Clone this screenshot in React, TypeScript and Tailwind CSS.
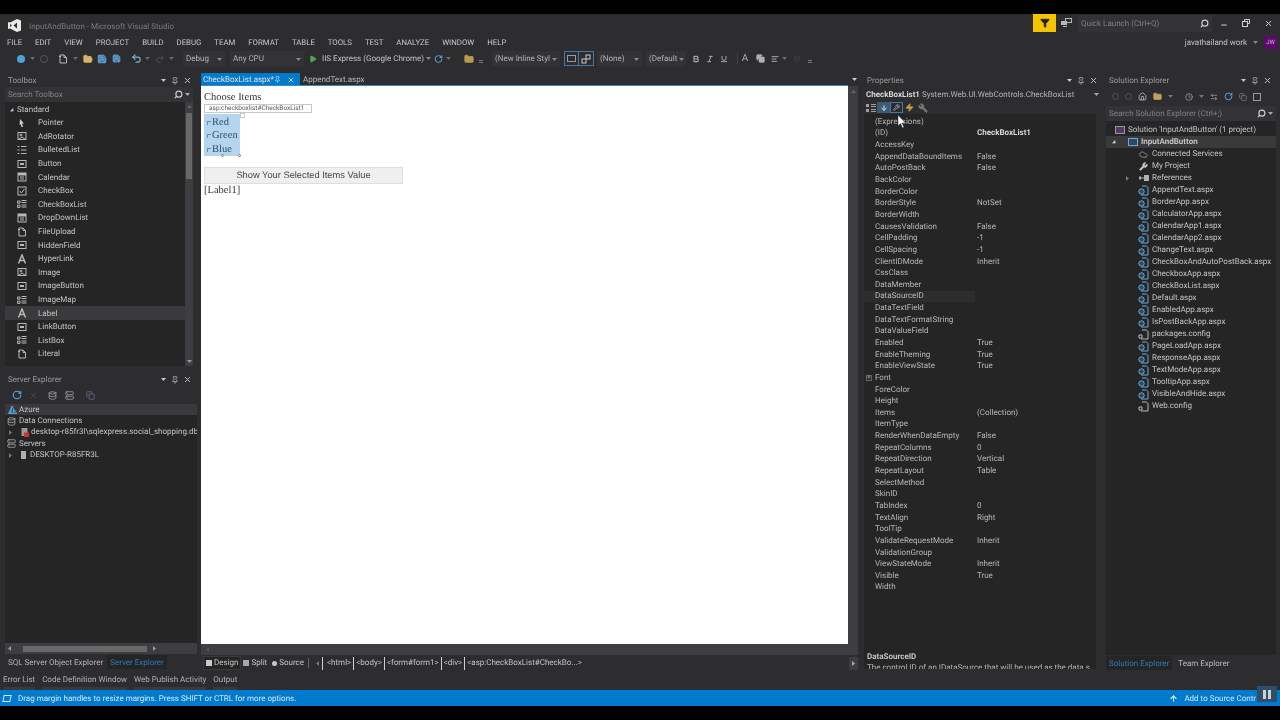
import React from "react";
import { Pin, X, Search, RotateCw, Undo2, Redo2, Play, Save, Minus, Bold, Italic, Underline, AlignLeft, Wrench, Home, ArrowUp, Filter, Cloud, Zap, Clock, ArrowLeftRight, Copy, Folder, FolderOpen, Server, Database, Trash2 } from "lucide-react";

const Caret = ({ c = "" }: { c?: string }) => (
  <svg width="5" height="3" viewBox="0 0 5 3" className={`shrink-0 ${c}`}><path d="M0 0h5L2.5 3z" fill="currentColor" /></svg>
);

const Grip = () => (
  <div className="flex items-center text-[#c8c8c8]">
    <Caret c="mr-[5px]" />
    <Pin size={8} strokeWidth={2} className="mr-[3.500px]" />
    <X size={9} strokeWidth={2.5} />
  </div>
);

const PanelTitle = ({ title, w }: { title: string; w?: string }) => (
  <div className={`flex h-[14px] shrink-0 items-center justify-between pl-[3px] pt-[1px] ${w ?? ""}`}>
    <span className="text-[#9a9a9a]">{title}</span>
    <Grip />
  </div>
);

const TB = ({ w, children, c = "" }: { w: number; children?: React.ReactNode; c?: string }) => (
  <div style={{ width: w }} className={`flex h-full shrink-0 items-center justify-center ${c}`}>{children}</div>
);

const Combo = ({ w, label, c = "" }: { w: number; label: string; c?: string }) => (
  <div style={{ width: w }} className={`flex h-[15px] shrink-0 items-center justify-between bg-[#333337] px-[3px] text-[#b4b4b4] ${c}`}>
    <span className="whitespace-nowrap">{label}</span>
    <Caret c="ml-[2px] text-[#8a8a8a]" />
  </div>
);

const Drop = () => <TB w={11}><Caret c="text-[#6a6a6a]" /></TB>;

type Kind = "arrow" | "box" | "list" | "check" | "cal" | "a" | "img" | "doc" | "lines";
const ToolIcon = ({ k }: { k: Kind }) => {
  const s = "#b8b8b8";
  return (
    <svg width="10" height="10" viewBox="0 0 10 10" fill="none" stroke={s} strokeWidth="1">
      {k === "arrow" && <path d="M3 1l4 4.5H5L6 9H4.500L3.500 6 2.500 7z" fill="#d0d0d0" stroke="none" />}
      {k === "box" && <><rect x="1" y="1.500" width="8" height="7" /><rect x="3" y="4" width="4" height="2" fill={s} stroke="none" /></>}
      {k === "list" && <path d="M0.500 1.500h2M0.500 5h2M0.500 8.500h2M4 1.500h5.500M4 5h5.500M4 8.500h5.500" />}
      {k === "check" && <><rect x="1" y="1" width="8" height="8" /><path d="M2.800 5l1.600 2 3-4" /></>}
      {k === "cal" && <><rect x="1" y="1" width="8" height="8" /><rect x="1" y="1" width="8" height="2.500" fill={s} stroke="none" /><path d="M3 5h4M3 7h4" /></>}
      {k === "a" && <path d="M1.500 9.500L5 1l3.500 8.500M3 6.500h4" strokeWidth="1.500" />}
      {k === "img" && <><rect x="1" y="1.500" width="8" height="7" /><circle cx="4" cy="4" r="1" /><path d="M2 8l3-2 3 2" /></>}
      {k === "doc" && <path d="M2 1h4l2.500 2.500V9H2zM6 1v2.500h2.500M1 2.500h2" />}
      {k === "lines" && <><path d="M0.500 2h2.500v2.200H.5zM.5 6.200h2.500v2.200H.5z" /><path d="M4.500 1.500h5M4.500 3.500h5M4.500 6h5M4.500 8h5" /></>}
    </svg>
  );
};

const toolbox: [string, Kind][] = [
  ["Pointer", "arrow"], ["AdRotator", "img"], ["BulletedList", "list"], ["Button", "box"], ["Calendar", "cal"],
  ["CheckBox", "check"], ["CheckBoxList", "lines"], ["DropDownList", "cal"], ["FileUpload", "doc"], ["HiddenField", "box"],
  ["HyperLink", "a"], ["Image", "img"], ["ImageButton", "box"], ["ImageMap", "lines"], ["Label", "a"],
  ["LinkButton", "box"], ["ListBox", "lines"], ["Literal", "doc"],
];

const props: [string, string?][] = [
  ["(Expressions)"], ["(ID)", "CheckBoxList1"], ["AccessKey"], ["AppendDataBoundItems", "False"], ["AutoPostBack", "False"],
  ["BackColor"], ["BorderColor"], ["BorderStyle", "NotSet"], ["BorderWidth"], ["CausesValidation", "False"],
  ["CellPadding", "-1"], ["CellSpacing", "-1"], ["ClientIDMode", "Inherit"], ["CssClass"], ["DataMember"],
  ["DataSourceID"], ["DataTextField"], ["DataTextFormatString"], ["DataValueField"], ["Enabled", "True"],
  ["EnableTheming", "True"], ["EnableViewState", "True"], ["Font"], ["ForeColor"], ["Height"],
  ["Items", "(Collection)"], ["ItemType"], ["RenderWhenDataEmpty", "False"], ["RepeatColumns", "0"], ["RepeatDirection", "Vertical"],
  ["RepeatLayout", "Table"], ["SelectMethod"], ["SkinID"], ["TabIndex", "0"], ["TextAlign", "Right"],
  ["ToolTip"], ["ValidateRequestMode", "Inherit"], ["ValidationGroup"], ["ViewStateMode", "Inherit"], ["Visible", "True"], ["Width"],
];

const files = [
  "AppendText.aspx", "BorderApp.aspx", "CalculatorApp.aspx", "CalendarApp1.aspx", "CalendarApp2.aspx", "ChangeText.aspx",
  "CheckBoxAndAutoPostBack.aspx", "CheckboxApp.aspx", "CheckBoxList.aspx", "Default.aspx", "EnabledApp.aspx", "IsPostBackApp.aspx",
  "packages.config", "PageLoadApp.aspx", "ResponseApp.aspx", "TextModeApp.aspx", "TooltipApp.aspx", "VisibleAndHide.aspx", "Web.config",
];

const FileIcon = ({ cfg }: { cfg: boolean }) => (
  <svg width="11" height="11" viewBox="0 0 11 11" fill="none" stroke={cfg ? "#b8b8b8" : "#6fa8cf"} strokeWidth="1">
    <path d="M4 1h4.500l1.500 1.500V10H3" />
    {cfg ? <path d="M1 6h3v3H1z" /> : <circle cx="3.500" cy="6.500" r="2.700" fill="#2a4a63" />}
  </svg>
);

const SolRow = ({ indent, icon, label, bold, bg, arrow }: { indent: number; icon: React.ReactNode; label: string; bold?: boolean; bg?: boolean; arrow?: React.ReactNode }) => (
  <div className={`relative flex h-[12px] shrink-0 items-center text-[#c4c4c4] ${bold ? "font-bold" : ""} ${bg ? "bg-[#3a3a3d]" : ""}`} style={{ paddingLeft: indent }}>
    {arrow}
    <span className="mr-[3px] flex w-[11px] shrink-0 justify-center">{icon}</span>
    <span className="whitespace-nowrap">{label}</span>
  </div>
);

const Chk = ({ label }: { label: string }) => (
  <div className="flex h-[13.500px] items-center">
    <span className="mr-[1px] ml-[3px] h-[4px] w-[4px] border-l border-t border-[#6b8aa3]" />
    <span>{label}</span>
  </div>
);

const Crumb = ({ t }: { t: string }) => (
  <span className="flex h-[13px] items-center whitespace-nowrap border-r border-[#d0d0d0] px-[2px]">{t}</span>
);

const menu = ["FILE", "EDIT", "VIEW", "PROJECT", "BUILD", "DEBUG", "TEAM", "FORMAT", "TABLE", "TOOLS", "TEST", "ANALYZE", "WINDOW", "HELP"];

export default function App() {
  return (
    <div className="flex h-[720px] w-[1280px] flex-col overflow-hidden bg-black py-[14px] text-[8px] text-[#c4c4c4] blur-[0.3px] [text-rendering:geometricPrecision]" style={{ fontFamily: 'Roboto, "Noto Sans", sans-serif' }}>
      <div className="flex h-[692px] flex-col bg-[#2d2d30]">
        {/* title bar */}
        <div className="flex h-[20px] shrink-0 items-start">
          <div className="ml-[7px] mt-[4px] w-[22px]">
            <svg width="15" height="15" viewBox="0 0 15 15"><path d="M10 1l4 1.500v10L10 14 3 10.500 1 11V4l2 .500zM10 4.500L6.500 7.500 10 10.500z" fill="#e8e8e8" /><path d="M3 6l2 1.500L3 9z" fill="#2d2d30" /></svg>
          </div>
          <span className="mt-[7px] text-[#7a7a7a]">InputAndButton - Microsoft Visual Studio</span>
          <div className="ml-auto flex h-[18px] items-center">
            <div className="flex h-[18px] w-[23px] items-center justify-center bg-[#f5c400]"><Filter size={10} fill="#222" stroke="#222" /></div>
            <div className="flex w-[20px] justify-center"><svg width="11" height="10" viewBox="0 0 11 10" fill="none" stroke="#b8b8b8"><rect x="4.500" y="0.500" width="6" height="4" /><rect x="0.500" y="3.500" width="5" height="3" fill="#b8b8b8" /><path d="M2 8.500h4" /></svg></div>
            <div className="ml-[2px] flex h-[17px] w-[134px] items-center justify-between bg-[#333337] px-[3px]">
              <span className="pt-[1px] text-[#808080]">Quick Launch (Ctrl+Q)</span>
              <Search size={9} strokeWidth={3} className="-scale-x-100 text-[#d0d0d0]" />
            </div>
            <div className="flex w-[23px] justify-center"><Minus size={8} strokeWidth={3} className="mt-[4px] text-[#d0d0d0]" /></div>
            <div className="flex w-[22px] justify-center"><svg width="8" height="8" viewBox="0 0 8 8" fill="none" stroke="#d0d0d0"><path d="M2.500 2V.5h5v4H6" /><rect x=".5" y="2.500" width="5" height="5" /></svg></div>
            <div className="flex w-[23px] justify-center"><X size={9} strokeWidth={2.500} className="text-[#d0d0d0]" /></div>
          </div>
        </div>
        {/* menu */}
        <div className="flex h-[16px] shrink-0 items-center">
          <div className="ml-[7px] flex gap-[13px] pt-[1px] text-[7.800px] text-[#c8c8c8]">
            {menu.map((m) => <span key={m}>{m}</span>)}
          </div>
          <div className="ml-auto flex items-center">
            <span className="pt-[1px] text-[#c4c4c4]">javathailand work</span>
            <Caret c="mx-[6px] text-[#8a8a8a]" />
            <div className="mr-[3px] flex h-[13px] w-[13px] items-center justify-center bg-[#5c0a6b] text-[6px] text-[#d8b0e0]">JW</div>
          </div>
        </div>
        {/* toolbar */}
        <div className="flex h-[17px] shrink-0 items-center pl-[15px]">
          <TB w={12}><span className="h-[8px] w-[8px] rounded-full bg-[#4f9fd8]" /></TB>
          <Drop />
          <TB w={12}><span className="h-[8px] w-[8px] rounded-full border border-[#555]" /></TB>
          <TB w={6} />
          <TB w={13}><ToolIcon k="doc" /></TB>
          <TB w={12}><Caret c="text-[#6a6a6a]" /></TB>
          <TB w={13}><FolderOpen size={10} fill="#d8b56a" className="text-[#d8b56a]" /></TB>
          <TB w={15}><Save size={10} className="text-[#7ab0dc]" fill="#3f7cb0" /></TB>
          <TB w={15}><Save size={9} className="text-[#7ab0dc]" fill="#3f7cb0" /></TB>
          <TB w={7} />
          <TB w={11}><Undo2 size={11} strokeWidth={2.500} className="text-[#7ab0dc]" /></TB>
          <Drop />
          <TB w={13}><Redo2 size={10} className="text-[#555]" /></TB>
          <Drop />
          <TB w={6} />
          <Combo w={42} label="Debug" c="pt-[1px]" />
          <TB w={5} />
          <Combo w={74} label="Any CPU" c="pt-[1px]" />
          <TB w={5} />
          <TB w={8}><Play size={8} fill="#4fa94f" stroke="#4fa94f" /></TB>
          <span className="ml-[5px] w-[100px] shrink-0 whitespace-nowrap pt-[1px] text-[#c4c4c4]">IIS Express (Google Chrome)</span>
          <TB w={12}><Caret c="text-[#8a8a8a]" /></TB>
          <TB w={9}><RotateCw size={10} strokeWidth={2.500} className="text-[#5fa8e0]" /></TB>
          <Drop />
          <TB w={9} />
          <TB w={11}><Folder size={10} fill="#b89a50" className="text-[#b89a50]" /></TB>
          <TB w={13}><span className="mt-[5px] h-[3px] w-[4px] border-y border-[#777]" /></TB>
          <TB w={5} />
          <Combo w={68} label="(New Inline Styl" c="pt-[1px]" />
          <TB w={4} />
          <div className="flex h-[15px] w-[30px] shrink-0 border border-[#3f78ac]">
            <TB w={14} c="border-r border-[#3f78ac]"><span className="h-[7px] w-[9px] border border-[#999]" /></TB>
            <TB w={14}><svg width="10" height="10" viewBox="0 0 10 10" fill="none" stroke="#c8c8c8"><rect x="1" y="5" width="4" height="4" /><rect x="5" y="1" width="4" height="4" /></svg></TB>
          </div>
          <TB w={3} />
          <Combo w={45} label="(None)" c="pt-[1px]" />
          <TB w={4} />
          <Combo w={40} label="(Default" c="pt-[1px]" />
          <TB w={20}><Bold size={8} strokeWidth={3.500} className="text-[#a8a8a8]" /></TB>
          <TB w={8}><Italic size={8} strokeWidth={3} className="text-[#a8a8a8]" /></TB>
          <TB w={20}><Underline size={8} strokeWidth={3} className="text-[#a8a8a8]" /></TB>
          <TB w={7}><span className="h-[11px] w-px bg-[#444]" /></TB>
          <TB w={8}><span className="text-[10px] leading-none text-[#b0b0b0]">A</span></TB>
          <TB w={22}><Copy size={9} fill="#b0b0b0" className="text-[#b0b0b0]" /></TB>
          <TB w={8}><AlignLeft size={10} strokeWidth={2.500} className="text-[#c0c0c0]" /></TB>
          <Drop />
          <TB w={14}><Trash2 size={8} className="text-[#444]" /></TB>
          <TB w={12}><span className="mt-[5px] h-[3px] w-[4px] border-y border-[#777]" /></TB>
        </div>
        {/* panels */}
        <div className="mt-[6px] flex h-[597px] shrink-0">
          {/* left */}
          <div className="flex w-[197px] shrink-0 flex-col pl-[5px]">
            <PanelTitle title="Toolbox" w="w-[188px] pr-[1.500px]" />
            <div className="flex h-[15px] w-[188px] shrink-0 items-center justify-between bg-[#333337] px-[3px]">
              <span className="pt-[1px] text-[#808080]">Search Toolbox</span>
              <div className="flex items-center gap-[2px]"><Search size={9} strokeWidth={3} className="-scale-x-100 text-[#d0d0d0]" /><Caret c="text-[#aaa]" /></div>
            </div>
            <div className="flex h-[264px] w-[188px] shrink-0 overflow-hidden">
              <div className="w-[180px] bg-[#252526] pt-[1px]">
                <div className="flex h-[13px] items-center pl-[5px] pt-[1px] text-[#c4c4c4]"><Caret c="mr-[2px] rotate-[-45deg]" />Standard</div>
                {toolbox.map(([n, k]) => (
                  <div key={n} className={`flex h-[13.600px] items-center pl-[12px] ${n === "Label" ? "bg-[#3a3a3d]" : ""}`}>
                    <span className="flex w-[21px] shrink-0"><ToolIcon k={k} /></span>
                    <span className="pt-[1px] text-[#c4c4c4]">{n}</span>
                  </div>
                ))}
              </div>
              <div className="flex w-[8px] flex-col items-center bg-[#3e3e42]">
                <Caret c="mt-[3px] rotate-180 text-[#666]" />
                <div className="mt-[5px] h-[66px] w-[6px] bg-[#686868]" />
                <div className="flex-1" />
                <Caret c="mb-[3px] text-[#999]" />
              </div>
            </div>
            <div className="h-[6px] shrink-0" />
            <PanelTitle title="Server Explorer" w="w-[188px] pr-[1.500px]" />
            <div className="flex h-[18px] shrink-0 items-center gap-[7px] pl-[7px]">
              <RotateCw size={10} strokeWidth={2.500} className="text-[#5fa8e0]" />
              <X size={9} className="text-[#555]" />
              <Database size={9} className="ml-[3px] text-[#a8a8a8]" />
              <Server size={9} className="ml-[1px] text-[#a8a8a8]" />
              <Copy size={9} className="ml-[5px] text-[#7a6a98]" />
            </div>
            <div className="flex h-[239px] w-[192px] shrink-0 flex-col overflow-hidden bg-[#252526] text-[#c4c4c4]">
              <div className="flex h-[11px] shrink-0 items-center bg-[#3a3a3d] pl-[3px] pt-[1px]">
                <svg width="9" height="8" viewBox="0 0 9 8" className="mr-[2px] shrink-0"><path d="M3.500 0h2L3 6.500h6L9 8H0zM5.500 2L8 6H4.500z" fill="#4fa3e0" /></svg>Azure
                <span className="hidden" />
              </div>
              <div className="flex h-[11.300px] shrink-0 items-center pl-[2px] pt-[1px]"><Database size={9} className="mr-[3px] shrink-0 text-[#b0b0b0]" />Data Connections</div>
              <div className="flex h-[11.300px] shrink-0 items-center pl-[3px] pt-[1px]">
                <Caret c="mr-[8px] -rotate-90 text-[#777]" />
                <svg width="8" height="9" viewBox="0 0 8 9" className="mr-[2px] shrink-0"><rect x="0.500" y="0" width="6" height="8" fill="#9a9a9a" /><rect x="3" y="4.500" width="5" height="4.500" fill="#d03030" /></svg>
                <span className="whitespace-nowrap">desktop-r85fr3l\sqlexpress.social_shopping.dbo</span>
              </div>
              <div className="flex h-[11.300px] shrink-0 items-center pl-[2px] pt-[1px]"><Server size={9} className="mr-[3px] shrink-0 text-[#b0b0b0]" />Servers</div>
              <div className="flex h-[11.300px] shrink-0 items-center pl-[3px] pt-[1px]">
                <Caret c="mr-[8px] -rotate-90 text-[#777]" />
                <span className="mr-[4px] h-[8px] w-[5px] shrink-0 bg-[#b0b0b0]" />DESKTOP-R85FR3L
              </div>
            </div>
            <div className="flex h-[11px] w-[192px] shrink-0 items-center bg-[#3e3e42] px-[2px]">
              <Caret c="rotate-90 text-[#999]" />
              <div className="ml-[11px] h-[6px] w-[124px] bg-[#686868]" />
              <Caret c="ml-[5px] -rotate-90 text-[#999]" />
            </div>
            <div className="flex h-[15px] shrink-0 items-center pt-[1px]">
              <span className="px-[3px] pt-[1px] text-[#b4b4b4]">SQL Server Object Explorer</span>
              <span className="ml-[1px] flex h-[14px] items-center bg-[#252526] px-[3px] pt-[1px] text-[#2f79b5]">Server Explorer</span>
            </div>
          </div>
          {/* centre */}
          <div className="ml-[4px] flex w-[657px] shrink-0 flex-col">
            <div className="flex h-[12px] shrink-0 items-center">
              <div className="flex h-[13px] w-[99px] items-center justify-between bg-[#007acc] px-[2px] pt-[1px] text-[#e4e4e4]">
                <span>CheckBoxList.aspx*</span>
                <div className="flex items-center gap-[6px] pr-[3px]"><Pin size={7} /><X size={8} strokeWidth={2.500} /></div>
              </div>
              <span className="ml-[3px] pt-[1px] text-[#b8b8b8]">AppendText.aspx</span>
              <Caret c="ml-auto mr-[1px] text-[#ccc]" />
            </div>
            <div className="h-[1px] w-[647px] shrink-0 bg-[#3f86c0]" />
            <div className="flex h-[558px] shrink-0">
              <div className="w-[647px] bg-white pl-[3px] pt-[6px] text-[#222]" style={{ fontFamily: '"Liberation Serif", serif' }}>
                <div className="text-[10.500px] leading-[12px] text-[#333]">Choose Items</div>
                <div className="flex h-[9px] w-[108px] items-center border border-[#c8c8c8] pl-[4px] text-[6.500px] leading-none text-[#555]" style={{ fontFamily: 'Roboto, sans-serif' }}>asp:checkboxlist#CheckBoxList1</div>
                <div className="relative mt-[1px] h-[42px] w-[36px] bg-[#b5d5ee] pt-[2px] text-[10.500px] text-[#27506f]">
                  <Chk label="Red" /><Chk label="Green" /><Chk label="Blue" />
                  <span className="absolute -right-[5px] -top-[1px] h-[5px] w-[5px] border border-[#ccc] bg-white" />
                  <span className="absolute -bottom-[1px] -right-[1px] h-[3px] w-[3px] rounded-full border border-[#777] bg-white" />
                  <span className="absolute -bottom-[1px] left-[17px] h-[3px] w-[3px] rounded-full border border-[#777] bg-white" />
                </div>
                <div className="mt-[11px] flex h-[17px] w-[199px] items-center justify-center border border-[#dedede] bg-[#efefef] pt-[1px] text-[#444]" style={{ fontFamily: '"Liberation Sans", sans-serif', fontSize: "9.300px" }}>Show Your Selected Items Value</div>
                <div className="mt-[1px] text-[10.500px] leading-[12px] text-[#333]">[Label1]</div>
              </div>
              <div className="flex w-[10px] flex-col items-center bg-[#3e3e42]"><Caret c="mt-[4px] rotate-180 text-[#666]" /></div>
            </div>
            <div className="flex h-[11px] shrink-0 items-center bg-[#3e3e42] pl-[4px]"><Caret c="rotate-90 text-[#555]" /></div>
            <div className="flex h-[15px] shrink-0 items-center pt-[1px] text-[#c4c4c4]">
              <div className="ml-[2px] flex h-[14px] items-center border border-[#3a3a3d] bg-[#252526] px-[2px]"><span className="mr-[2px] h-[6px] w-[6px] bg-[#c8c8c8]" />Design</div>
              <div className="ml-[2px] flex items-center"><span className="mr-[2px] h-[6px] w-[6px] bg-[#a8a8a8]" />Split</div>
              <div className="ml-[5px] flex items-center"><span className="mr-[2px] h-[5px] w-[5px] rounded-full bg-[#c8c8c8]" />Source</div>
              <div className="ml-[4px] mr-[6px] h-[10px] w-px bg-[#666]" />
              <Caret c="mr-[2px] rotate-90 text-[#777]" />
              <span className="mr-[2px] h-[13px] w-px bg-[#d0d0d0]" />
              <Crumb t="<html>" /><Crumb t="<body>" /><Crumb t="<form#form1>" /><Crumb t="<div>" />
              <span className="whitespace-nowrap pl-[2px]">{"<asp:CheckBoxList#CheckBo...>"}</span>
              <div className="ml-auto flex h-[13px] w-[9px] items-center justify-center bg-[#3e3e42]"><Caret c="-rotate-90 text-[#aaa]" /></div>
            </div>
          </div>
          {/* properties */}
          <div className="relative ml-[6px] flex w-[236px] shrink-0 flex-col">
            <PanelTitle title="Properties" w="w-[236px] pr-[2.500px]" />
            <div className="flex h-[14px] shrink-0 items-center justify-between pl-[2px] pr-[1px] pt-[1px]">
              <span className="whitespace-nowrap text-[#b4b4b4]"><b className="text-[#d8d8d8]">CheckBoxList1</b> System.Web.UI.WebControls.CheckBoxList</span>
              <Caret c="text-[#aaa]" />
            </div>
            <div className="flex h-[13px] shrink-0 items-center pl-[2px]">
              <svg width="10" height="10" viewBox="0 0 10 10" className="mr-[1px] shrink-0"><path d="M0 1h3v3H0zM0 6h3v3H0zM5 1h5v1H5zM5 3h5v1H5zM5 6h5v1H5zM5 8h5v1H5z" fill="#a0a0a0" /></svg>
              <span className="flex h-[11px] w-[13px] items-center justify-center bg-[#3d5a73]"><ArrowUp size={8} strokeWidth={3} className="rotate-180 text-[#cfe2f0]" /></span>
              <span className="flex h-[11px] w-[13px] items-center justify-center border border-[#3f78ac]"><Wrench size={7} className="text-[#d0d0d0]" /></span>
              <Zap size={9} fill="#c8a040" className="ml-[2px] text-[#c8a040]" />
              <Wrench size={10} fill="#777" className="ml-[4px] -scale-x-100 text-[#777]" />
            </div>
            <div className="flex h-[555px] w-[232px] shrink-0 flex-col overflow-hidden bg-[#252526]">
              <div className="relative flex-1 pl-[11px] pt-[2px]">
                {props.map(([n, v]) => (
                  <div key={n} className={`relative flex h-[11.650px] items-center ${n === "DataSourceID" ? "bg-[#2d2d30] -ml-[11px] pl-[11px] w-[111px]" : ""}`}>
                    {n === "Font" && <span className="absolute -left-[9px] flex h-[6px] w-[6px] items-center justify-center border border-[#666] text-[6px] leading-none">+</span>}
                    <span className="w-[102px] shrink-0 whitespace-nowrap text-[#b8b8b8]">{n}</span>
                    <span className={`whitespace-nowrap ${n === "(ID)" ? "font-bold text-[#d8d8d8]" : "text-[#b8b8b8]"}`}>{v}</span>
                  </div>
                ))}
              </div>
              <div className="h-[18px] shrink-0 overflow-hidden px-[3px]">
                <div className="font-bold leading-[11px] text-[#c4c4c4]">DataSourceID</div>
                <div className="whitespace-nowrap leading-[11px] text-[#b4b4b4]">The control ID of an IDataSource that will be used as the data s</div>
              </div>
            </div>
            <svg width="9" height="13" viewBox="0 0 9 13" className="absolute left-[33px] top-[42px]"><path d="M1 0v11l2.500-2.500L5.500 13l1.500-.7L5 8h3.500z" fill="#fff" stroke="#222" strokeWidth=".5" /></svg>
          </div>
          {/* solution */}
          <div className="ml-[6px] flex w-[170px] shrink-0 flex-col">
            <PanelTitle title="Solution Explorer" w="pr-[4.500px]" />
            <div className="flex h-[19px] shrink-0 items-center gap-[6px] pl-[6px]">
              <span className="h-[7px] w-[7px] rounded-full border border-[#555]" />
              <span className="h-[7px] w-[7px] rounded-full border border-[#555]" />
              <Home size={9} className="text-[#c8c8c8]" />
              <Folder size={9} fill="#c0a060" className="text-[#c0a060]" />
              <Caret c="text-[#777]" />
              <Clock size={8} className="ml-[6px] text-[#aaa]" />
              <Caret c="text-[#777]" />
              <ArrowLeftRight size={8} className="text-[#aaa]" />
              <RotateCw size={9} strokeWidth={2.500} className="text-[#5fa8e0]" />
              <Copy size={8} className="text-[#888]" />
              <span className="h-[8px] w-[8px] border border-[#999]" />
            </div>
            <div className="flex h-[15px] shrink-0 items-center justify-between bg-[#333337] px-[3px]">
              <span className="pt-[1px] text-[#808080]">Search Solution Explorer (Ctrl+;)</span>
              <div className="flex items-center gap-[2px]"><Search size={9} strokeWidth={3} className="-scale-x-100 text-[#d0d0d0]" /><Caret c="text-[#aaa]" /></div>
            </div>
            <div className="flex h-[534px] shrink-0 flex-col overflow-hidden bg-[#252526] pt-[3px]">
              <SolRow indent={8} icon={<span className="h-[8px] w-[10px] border border-[#999] bg-[#553a66]" />} label="Solution 'InputAndButton' (1 project)" />
              <SolRow indent={21} bold bg arrow={<Caret c="absolute left-[6px] rotate-[-45deg] text-[#ccc]" />} icon={<span className="h-[8px] w-[10px] border border-[#6fa8cf] bg-[#2a4a63]" />} label="InputAndButton" />
              <SolRow indent={32} icon={<Cloud size={9} className="text-[#999]" />} label="Connected Services" />
              <SolRow indent={32} icon={<Wrench size={9} fill="#c8c8c8" className="text-[#c8c8c8]" />} label="My Project" />
              <SolRow indent={32} arrow={<Caret c="absolute left-[19px] -rotate-90 text-[#777]" />} icon={<svg width="10" height="6" viewBox="0 0 10 6"><path d="M0 1.500h2v3H0zM5 0h5v6H5zM2 2.500h3v1H2z" fill="#b0b0b0" /></svg>} label="References" />
              {files.map((f) => <SolRow key={f} indent={32} icon={<FileIcon cfg={f.endsWith("config")} />} label={f} />)}
            </div>
            <div className="flex h-[15px] shrink-0 items-center pt-[1px]">
              <span className="flex h-[14px] items-center bg-[#252526] px-[3px] pt-[1px] text-[#2f79b5]">Solution Explorer</span>
              <span className="ml-[3px] px-[3px] pt-[1px] text-[#b8b8b8]">Team Explorer</span>
            </div>
          </div>
        </div>
        {/* bottom tabs */}
        <div className="mt-[1px] flex h-[19px] shrink-0 items-end gap-[7px] pl-[3px] text-[#b4b4b4]">
          <span className="border-b-[3px] border-[#3a3a3d] pb-[1px]">Error List</span><span className="border-b-[3px] border-[#3a3a3d] pb-[1px]">Code Definition Window</span><span className="border-b-[3px] border-[#3a3a3d] pb-[1px]">Web Publish Activity</span><span className="border-b-[3px] border-[#3a3a3d] pb-[1px]">Output</span>
        </div>
        {/* status */}
        <div className="relative flex h-[16px] shrink-0 items-center bg-[#007acc] pl-[3px] text-[#d8e8f4]">
          <span className="mr-[7px] h-[7px] w-[8px] skew-x-[-12deg] border border-[#d8e8f4]" />
          <span className="pt-[1px]">Drag margin handles to resize margins. Press SHIFT or CTRL for more options.</span>
          <ArrowUp size={9} strokeWidth={3} className="ml-auto mr-[6px]" />
          <span className="mr-[24px] whitespace-nowrap pt-[1px]">Add to Source Contr</span>
          <div className="absolute right-[3px] top-[-4px] flex h-[16px] w-[20px] items-center justify-center gap-[2px] bg-[#2d4f68]">
            <span className="h-[9px] w-[3px] bg-[#d0d0d0]" /><span className="h-[9px] w-[3px] bg-[#d0d0d0]" />
          </div>
        </div>
      </div>
    </div>
  );
}
